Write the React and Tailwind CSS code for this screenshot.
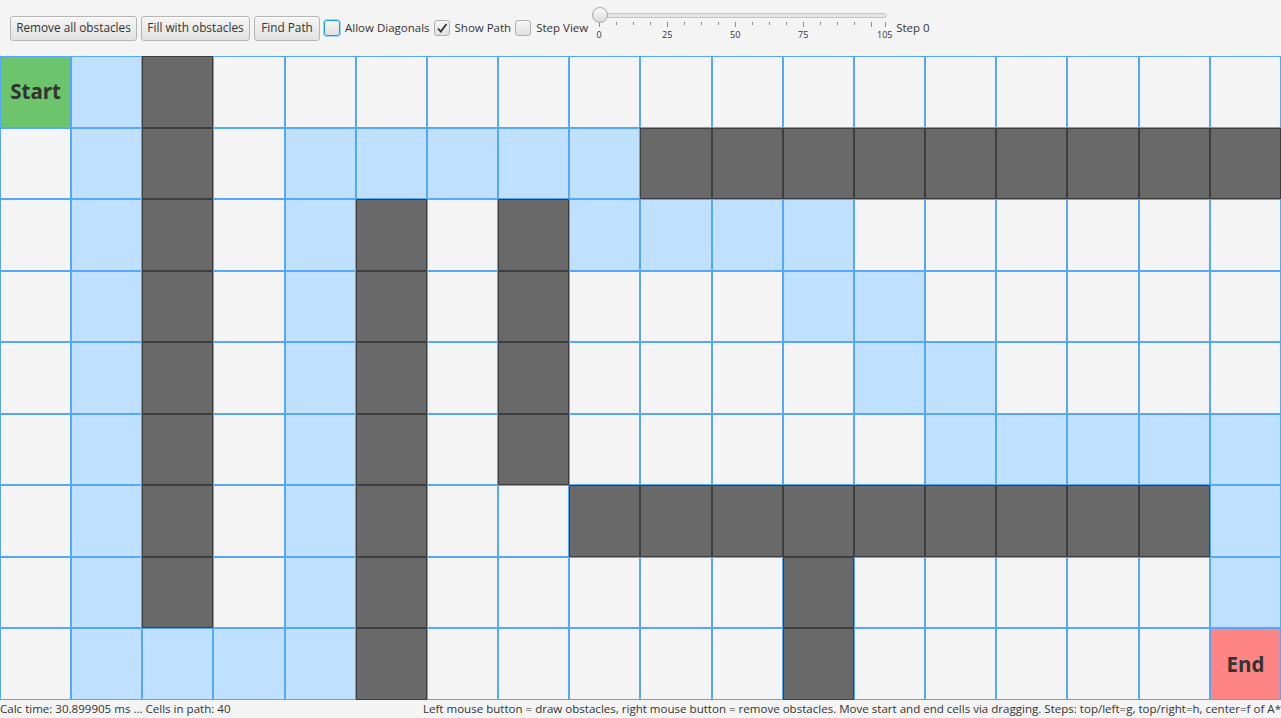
import React from "react";

const ROWS = [
  "SPO...............",
  ".PO.PPPPPOOOOOOOOO",
  ".PO.PO.OPPPP......",
  ".PO.PO.O...PP.....",
  ".PO.PO.O....PP....",
  ".PO.PO.O.....PPPPP",
  ".PO.PO..OOOOOOOOOP",
  ".PO.PO.....O.....P",
  ".PPPPO.....O.....E",
];

function Cell({ t }) {
  if (t === "O") return <div className="bg-[#696969] border border-[#3e3e3e]" />;
  if (t === "P") return <div className="bg-[#bfe0ff] border border-[#55a8f7]" />;
  if (t === "S")
    return (
      <div className="bg-[#6cc46c] border border-[#55a8f7] flex items-center justify-center text-[20.5px] font-bold text-[#333333]">
        Start
      </div>
    );
  if (t === "E")
    return (
      <div className="bg-[#ff8585] border border-[#55a8f7] flex items-center justify-center text-[20.5px] font-bold text-[#333333]">
        End
      </div>
    );
  return <div className="bg-[#f4f4f4] border border-[#55a8f7]" />;
}

function Btn({ children, w }) {
  return (
    <button
      className={`h-[25px] ${w} rounded-[3px] border border-[#b5b5b5] bg-gradient-to-b from-[#f5f5f5] to-[#e2e2e2] text-[11.8px] text-[#333333] flex items-center justify-center shadow-[inset_0_1px_0_#ffffff]`}
    >
      {children}
    </button>
  );
}

function Check({ checked, focus }) {
  return (
    <div
      className={`w-[16px] h-[16px] rounded-[3px] flex items-center justify-center bg-gradient-to-b from-[#f7f7f7] to-[#e0e0e0] border ${
        focus ? "border-[#1a9fd6] shadow-[0_0_0_1px_#9fd4ee]" : "border-[#b0b0b0]"
      }`}
    >
      {checked && (
        <svg width="12" height="12" viewBox="0 0 12 12">
          <path d="M2 6.5 L4.8 9.5 L10.5 2" fill="none" stroke="#333" strokeWidth="1.8" />
        </svg>
      )}
    </div>
  );
}

function Slider() {
  const W = 300;
  const x0 = 7;
  const per = 68 / 25;
  const ticks = [];
  for (let v = 0; v <= 105; v += 25 / 4) {
    ticks.push(v);
  }
  const labels = [0, 25, 50, 75, 105];
  return (
    <div className="relative w-[300px] h-[56px]">
      <div className="absolute left-[7px] top-[13px] w-[288px] h-[5px] rounded-full bg-[#e6e6e6] border border-[#c2c2c2]" />
      <svg className="absolute left-0 top-0" width={W} height="56">
        {ticks.map((v, i) => {
          const major = Math.abs(v % 25) < 0.01;
          const x = Math.round(x0 + v * per) + 0.5;
          return (
            <line
              key={i}
              x1={x}
              x2={x}
              y1={22}
              y2={major ? 27 : 25}
              stroke="#8a8a8a"
              strokeWidth="1"
            />
          );
        })}
        <line x1={Math.round(x0 + 105 * per) + 0.5} x2={Math.round(x0 + 105 * per) + 0.5} y1={22} y2={27} stroke="#8a8a8a" />
      </svg>
      {labels.map((v) => (
        <span
          key={v}
          className="absolute top-[30px] text-[9px] leading-[10px] text-[#333333] -translate-x-1/2"
          style={{ left: x0 + v * per }}
        >
          {v}
        </span>
      ))}
      <div className="absolute left-0 top-[7px] w-[16px] h-[16px] rounded-full border border-[#a9a9a9] bg-gradient-to-b from-[#fafafa] to-[#dcdcdc]" />
    </div>
  );
}

export default function App() {
  return (
    <div
      className="w-[1281px] h-[718px] bg-[#f4f4f4] overflow-hidden flex flex-col text-[#333333]"
      style={{ fontFamily: '"Open Sans", "Noto Sans", sans-serif' }}
    >
      <div className="h-[56px] flex items-center pl-[10px] gap-[4px]">
        <Btn w="w-[127px]">Remove all obstacles</Btn>
        <Btn w="w-[109px]">Fill with obstacles</Btn>
        <Btn w="w-[66px]">Find Path</Btn>
        <div className="flex items-center gap-[5px]">
          <Check focus />
          <span className="text-[11.5px]">Allow Diagonals</span>
        </div>
        <div className="flex items-center gap-[5px]">
          <Check checked />
          <span className="text-[11.5px]">Show Path</span>
        </div>
        <div className="flex items-center gap-[5px]">
          <Check />
          <span className="text-[11.5px]">Step View</span>
        </div>
        <Slider />
        <span className="text-[11.5px]">Step 0</span>
      </div>
      <div className="h-[644px] grid grid-cols-[repeat(18,minmax(0,1fr))] grid-rows-[repeat(9,minmax(0,1fr))]">
        {ROWS.flatMap((r, ri) => r.split("").map((t, ci) => <Cell key={ri + "-" + ci} t={t} />))}
      </div>
      <div className="h-[18px] flex justify-between items-center text-[11.55px] leading-[18px] whitespace-nowrap">
        <span>Calc time: 30.899905 ms ... Cells in path: 40</span>
        <span>
          Left mouse button = draw obstacles, right mouse button = remove obstacles. Move start and end cells via dragging. Steps: top/left=g, top/right=h, center=f of A*
        </span>
      </div>
    </div>
  );
}
